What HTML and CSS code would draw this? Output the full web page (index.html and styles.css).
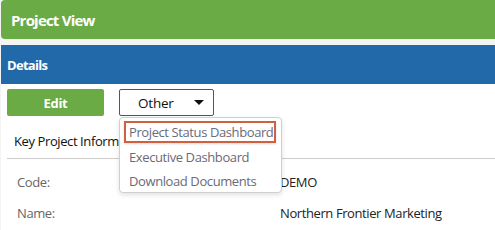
FILE: index.html
```html
<!DOCTYPE html>
<html>
<head>
<meta charset="utf-8">
<link rel="stylesheet" href="styles.css">
</head>
<body>
<div class="page">
  <div class="title-bar">Project View</div>
  <div class="panel">
    <div class="panel-head">Details</div>
    <div class="panel-body">
      <div class="toolbar">
        <button class="btn-edit">Edit</button>
        <div class="dropdown">
          <button class="btn-other"><span>Other</span><span class="caret"></span></button>
          <ul class="menu">
            <li class="item active">Project Status Dashboard</li>
            <li class="item">Executive Dashboard</li>
            <li class="item">Download Documents</li>
          </ul>
        </div>
      </div>
      <div class="section-title">Key Project Information</div>
      <div class="rows">
        <div class="row"><span class="label">Code:</span><span class="value">DEMO</span></div>
        <div class="row"><span class="label">Name:</span><span class="value">Northern Frontier Marketing</span></div>
      </div>
    </div>
  </div>
</div>
</body>
</html>
```
FILE: styles.css
```css
html, body {
  margin: 0;
  padding: 0;
  background: #ffffff;
}
body {
  font-family: "Open Sans", "Liberation Sans", sans-serif;
  font-size: 13px;
  letter-spacing: -0.4px;
  color: #222;
}
.page {
  padding-left: 1px;
  background: #f4f4f4;
  overflow: hidden;
  height: 230px;
}
.title-bar {
  height: 39px;
  line-height: 40px;
  background: #6aab45;
  border-radius: 4px 0 0 4px;
  color: #fff;
  font-weight: 700;
  font-size: 15px;
  letter-spacing: -0.8px;
  padding-left: 10px;
}
.panel {
  margin-top: 6px;
  background: #fff;
  height: 200px;
}
.panel-head {
  height: 39px;
  line-height: 41px;
  background: #2169a8;
  color: #fff;
  font-weight: 700;
  font-size: 13px;
  letter-spacing: -0.7px;
  padding-left: 6px;
}
.panel-body {
  padding: 5px 0 0 6px;
}
.toolbar {
  display: flex;
  gap: 15px;
  height: 27px;
}
.btn-edit {
  width: 97px;
  height: 27px;
  background: #6aab45;
  border: none;
  border-radius: 2px;
  color: #fff;
  font-family: inherit;
  font-weight: 700;
  font-size: 13px;
  letter-spacing: -0.3px;
  padding: 0;
}
.dropdown {
  position: relative;
}
.btn-other {
  width: 95px;
  height: 27px;
  background: #fff;
  border: 1px solid #555;
  border-radius: 2px;
  font-family: inherit;
  font-size: 13.5px;
  letter-spacing: -0.2px;
  color: #111;
  display: flex;
  align-items: center;
  justify-content: space-between;
  padding: 0 9px 0 18px;
}
.caret {
  width: 0;
  height: 0;
  border-left: 5px solid transparent;
  border-right: 5px solid transparent;
  border-top: 5px solid #111;
}
.menu {
  position: absolute;
  left: 0;
  top: 28px;
  width: 161px;
  margin: 0;
  padding: 3px 0 0 0;
  list-style: none;
  background: #fff;
  border: 1px solid #d0d0d0;
  border-radius: 4px;
  box-shadow: 0 2px 5px rgba(0,0,0,0.12);
  z-index: 5;
}
.item {
  margin: 0 5px 2.5px 4px;
  height: 18px;
  line-height: 18px;
  padding-left: 3px;
  color: #6a6a78;
  white-space: nowrap;
  border: 2px solid transparent;
}
.item:last-child {
  margin-bottom: 0;
}
.item.active {
  border-color: #d0603f;
  box-shadow: 0 1px 2px rgba(0,0,0,0.15);
}
.section-title {
  margin-top: 13px;
  padding: 0 0 4px 7px;
  height: 25px;
  line-height: 25px;
  border-bottom: 1px solid #ccc;
  color: #111;
}
.rows {
  padding-left: 10px;
  padding-top: 8px;
}
.row {
  display: flex;
  height: 31px;
  line-height: 31px;
}
.label {
  width: 263px;
  color: #666;
}
.value {
  color: #222;
}
```
